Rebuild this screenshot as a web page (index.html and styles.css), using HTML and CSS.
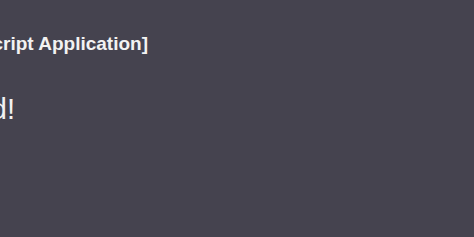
FILE: index.html
```html
<!DOCTYPE html>
<html lang="en">
<head>
  <meta charset="UTF-8" />
  <title>JavaScript Application</title>
  <link rel="stylesheet" href="styles.css">
</head>
<body>
  <div class="app">
    <div class="line title"><span>[JavaScript Application]</span></div>
    <div class="line hello"><span>Hello World!</span></div>
  </div>
</body>
</html>
```

FILE: styles.css
```css
html, body {
  margin: 0;
  height: 100%;
  background: #45434f;
  overflow: hidden;
}
.app {
  font-family: 'Liberation Sans', Arial, sans-serif;
  color: #f2f2f2;
  padding-top: 31px;
}
.line {
  display: flex;
  justify-content: flex-end;
  white-space: nowrap;
}
.title {
  width: 148px;
  font-size: 19px;
  font-weight: bold;
  line-height: 26px;
}
.hello {
  width: 15px;
  margin-top: 36px;
  font-size: 29px;
  line-height: 32px;
}
```
